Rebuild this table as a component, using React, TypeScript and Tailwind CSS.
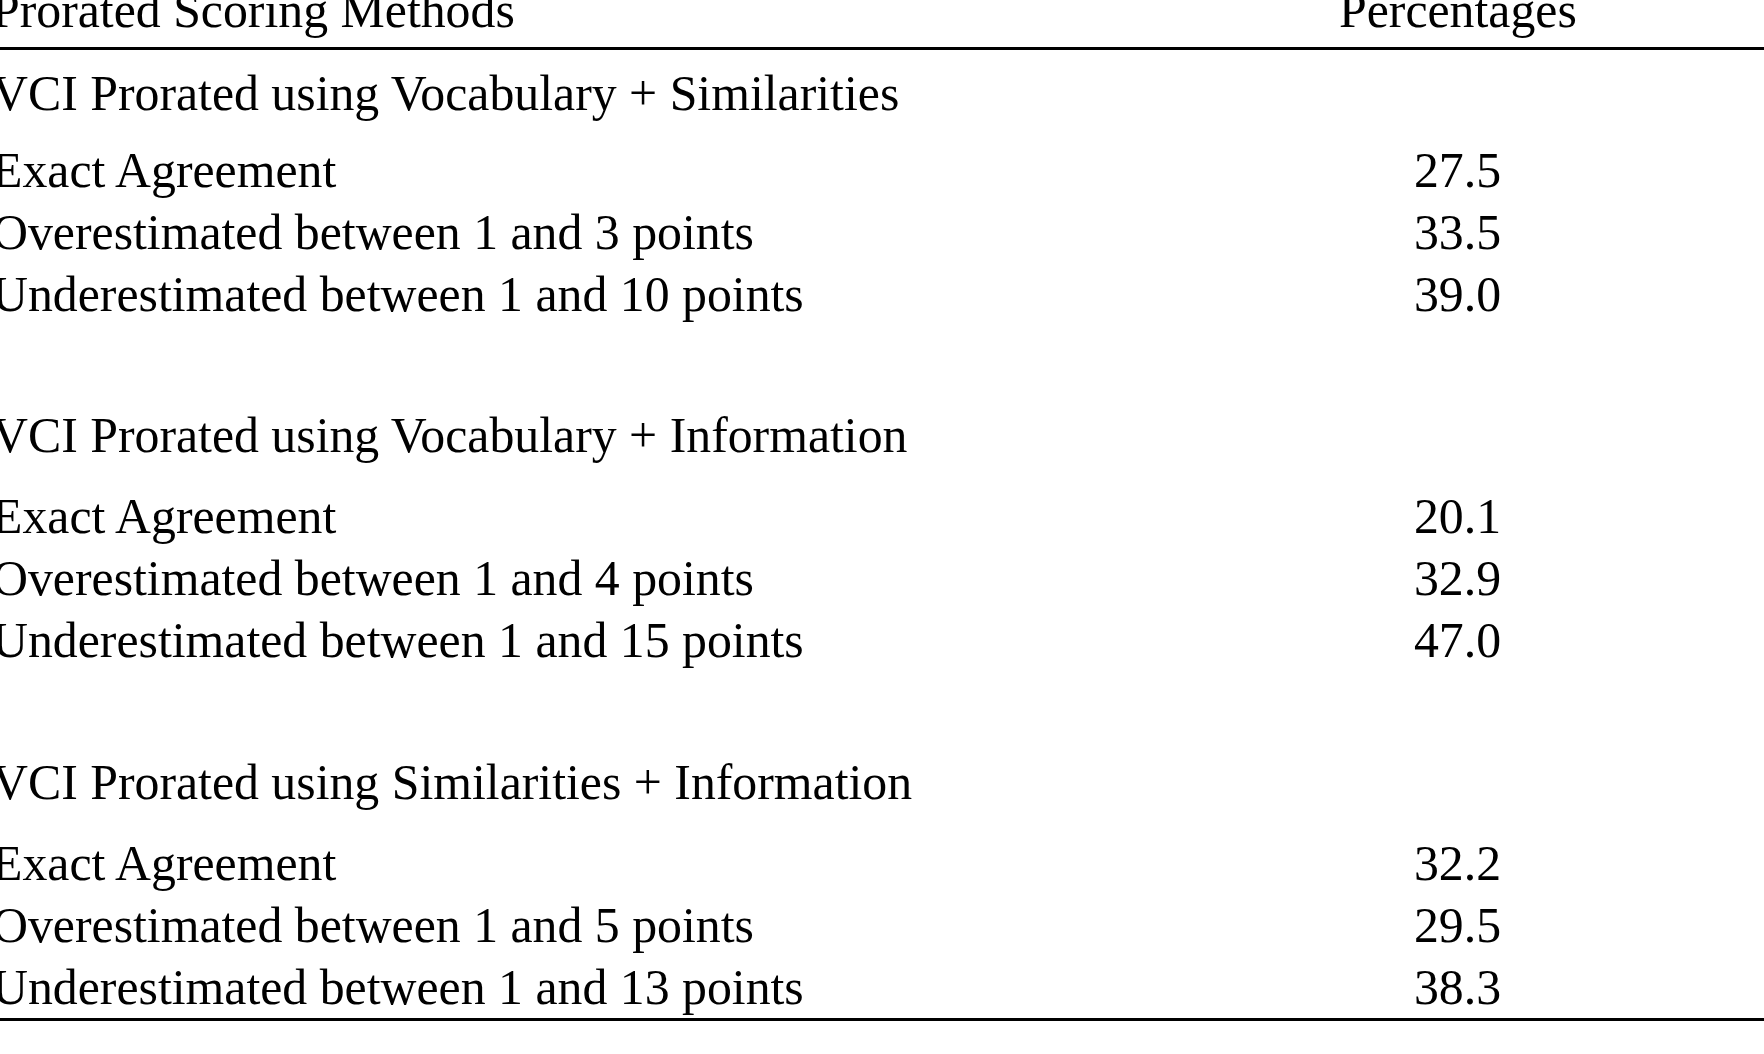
import React from "react"

const groups = [
  {
    title: "VCI Prorated using Vocabulary + Similarities",
    gap: "mt-[15px]",
    top: "mt-[13px]",
    rows: [
      ["Exact Agreement", "27.5"],
      ["Overestimated between 1 and 3 points", "33.5"],
      ["Underestimated between 1 and 10 points", "39.0"],
    ],
  },
  {
    title: "VCI Prorated using Vocabulary + Information",
    gap: "mt-[19px]",
    top: "mt-[79px]",
    rows: [
      ["Exact Agreement", "20.1"],
      ["Overestimated between 1 and 4 points", "32.9"],
      ["Underestimated between 1 and 15 points", "47.0"],
    ],
  },
  {
    title: "VCI Prorated using Similarities + Information",
    gap: "mt-[19px]",
    top: "mt-[80px]",
    rows: [
      ["Exact Agreement", "32.2"],
      ["Overestimated between 1 and 5 points", "29.5"],
      ["Underestimated between 1 and 13 points", "38.3"],
    ],
  },
]

function Row({ label, value }: { label: string; value?: string }) {
  return (
    <div className="flex h-[62px] leading-[62px] whitespace-nowrap">
      <div className="flex-1 ml-[-8px]">{label}</div>
      <div className="w-[237px] text-center">{value}</div>
      <div className="w-[188px]" />
    </div>
  )
}

export default function App() {
  return (
    <div className="w-[1764px] h-[1054px] overflow-hidden bg-white text-black text-[49.8px] font-['Liberation_Serif',serif]">
      <div className="mt-[-20px]">
        <Row label="Prorated Scoring Methods" value="Percentages" />
      </div>
      <div className="mt-[5px] border-t-[3px] border-black" />

      {groups.map((g) => (
        <div key={g.title}>
          <div className={g.top}>
            <Row label={g.title} />
          </div>
          <div className={g.gap}>
            {g.rows.map(([label, value]) => (
              <Row key={label} label={label} value={value} />
            ))}
          </div>
        </div>
      ))}

      <div className="mt-[-1px] border-t-[3px] border-black" />
    </div>
  )
}
